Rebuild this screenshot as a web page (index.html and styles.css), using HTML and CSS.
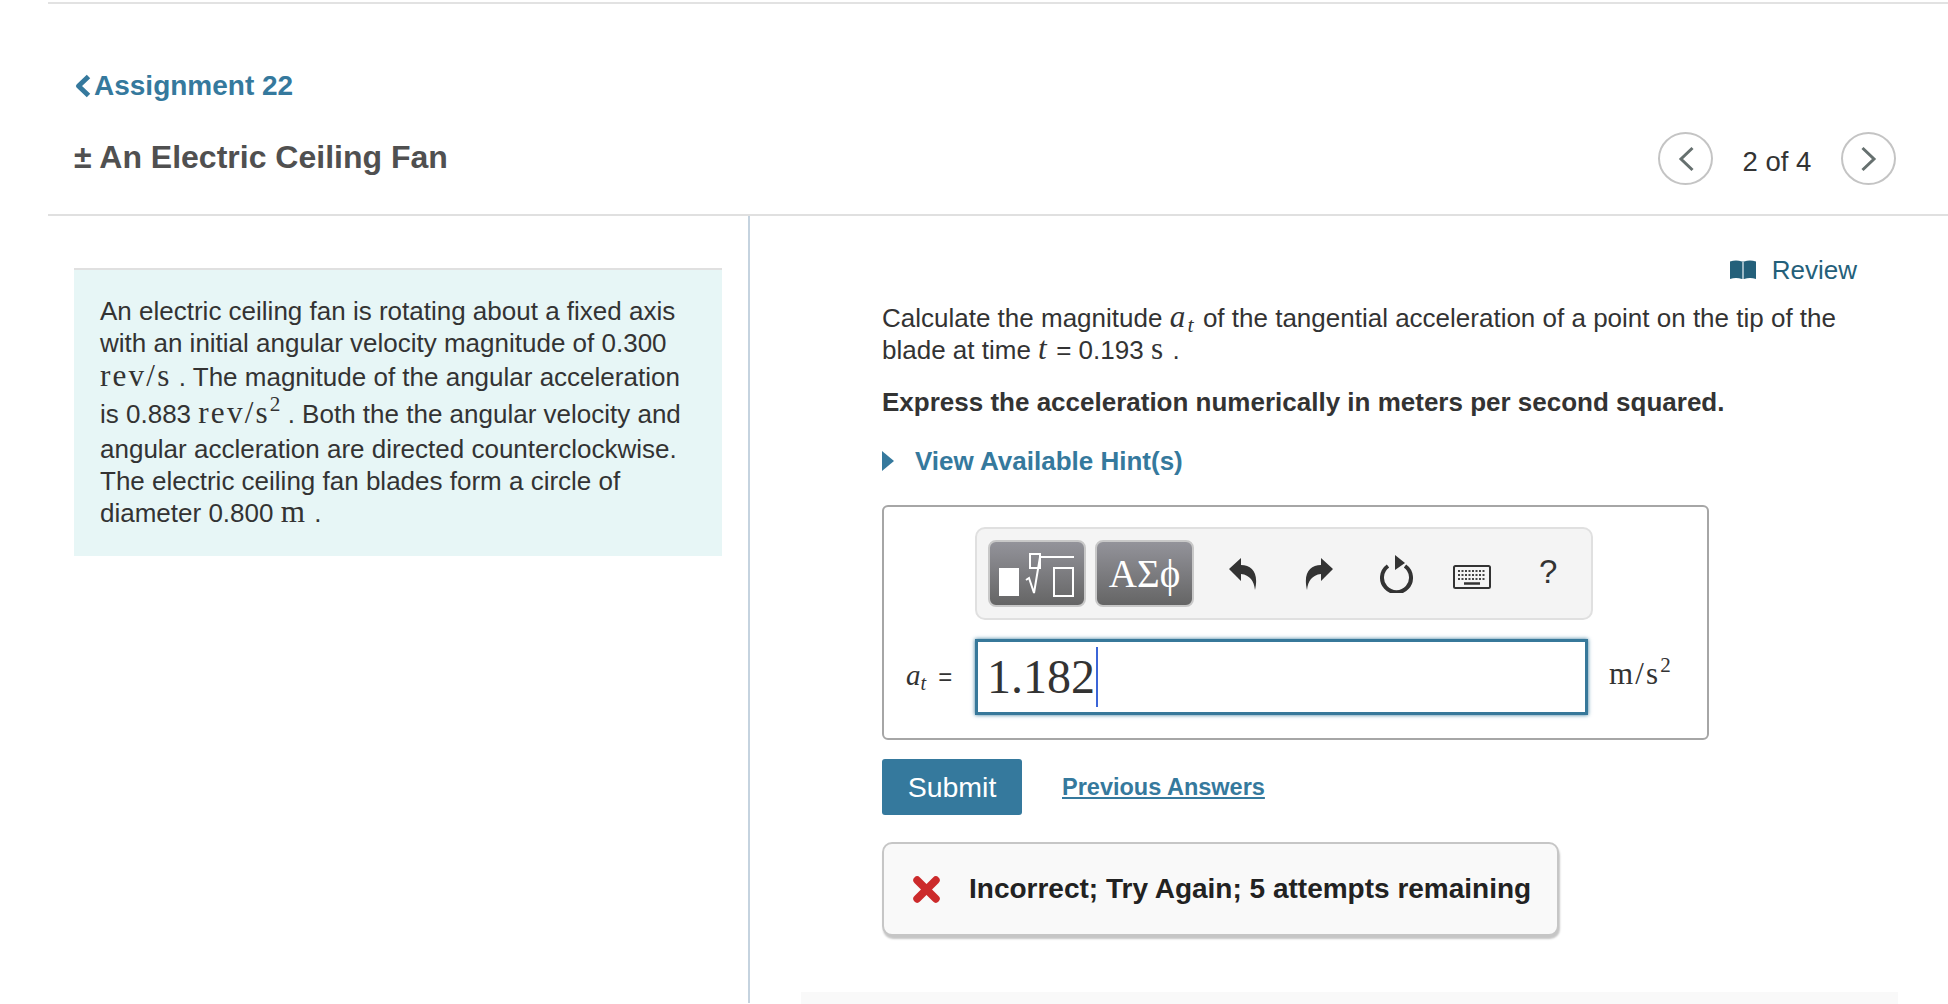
FILE: index.html
```html
<!DOCTYPE html>
<html lang="en">
<head>
<meta charset="utf-8">
<title>An Electric Ceiling Fan</title>
<link rel="stylesheet" href="styles.css">
</head>
<body>
<div class="page">
  <header class="head">
    <div class="head-left">
      <a class="back"><svg class="back-icon" viewBox="0 0 17 24"><path d="M14.500 2.500 4.500 12l10 9.500" fill="none" stroke="#35799d" stroke-width="5" stroke-linejoin="round"/></svg>Assignment 22</a>
      <h1 class="title">± An Electric Ceiling Fan</h1>
    </div>
    <nav class="pager">
      <span class="circle"><svg class="chev" viewBox="0 0 16 26"><path d="M14.500 2 3 13 14.500 24" fill="none" stroke="#66706f" stroke-width="3"/></svg></span>
      <span class="count">2 of 4</span>
      <span class="circle"><svg class="chev" viewBox="0 0 16 26"><path d="M1.500 2 13 13 1.500 24" fill="none" stroke="#66706f" stroke-width="3"/></svg></span>
    </nav>
  </header>
  <main class="main">
    <section class="left">
      <div class="panel">An electric ceiling fan is rotating about a fixed axis with an initial angular velocity magnitude of 0.300 <span class="m lift">rev/s</span> . The magnitude of the angular acceleration is 0.883 <span class="m tall">rev/s<sup>2</sup></span> . Both the the angular velocity and angular accleration are directed counterclockwise. The electric ceiling fan blades form a circle of diameter 0.800 <span class="m">m</span> .</div>
    </section>
    <section class="right">
      <div class="review">
        <svg class="book" viewBox="0 0 26 20"><path d="M0 1.500Q6 -.5 12 1.500V19Q6 17 0 19ZM14 1.500Q20 -.5 26 1.500V19Q20 17 14 19Z" fill="#24607a"/><rect x="12" y="1" width="2" height="18" fill="#9db9c6"/></svg>
        <span>Review</span>
      </div>
      <p class="para">Calculate the magnitude <span class="m"><i>a<sub>t</sub></i></span> of the tangential acceleration of a point on the tip of the blade at time <span class="m"><i>t</i></span> = 0.193 <span class="m">s</span> .</p>
      <p class="strong">Express the acceleration numerically in meters per second squared.</p>
      <div class="hint"><svg class="tri" viewBox="0 0 12 20"><path d="M0 0 12 10 0 20Z" fill="#35799d"/></svg><span>View Available Hint(s)</span></div>
      <div class="answer">
        <div class="toolbar">
          <span class="tbtn first">
            <svg class="tmpl" viewBox="0 0 76 46"><rect x="0" y="16" width="20" height="28" fill="#fff"/><rect x="31" y="2" width="10" height="14" fill="none" stroke="#fff" stroke-width="2"/><path d="M27 28l3-2 5 15 6-36h34" fill="none" stroke="#fff" stroke-width="2"/><rect x="55" y="16" width="19" height="28" fill="none" stroke="#fff" stroke-width="2"/></svg>
          </span>
          <span class="tbtn second">ΑΣϕ</span>
          <svg class="tool undo" viewBox="0 0 28 32"><path d="M0 11 12 0V7C23 7 30 15 26 32 25 23 21 17 12 16V23Z" fill="#333"/></svg>
          <svg class="tool redo" viewBox="0 0 28 32"><path d="M28 11 16 0V7C5 7-2 15 2 32 3 23 7 17 16 16V23Z" fill="#333"/></svg>
          <svg class="tool refresh" viewBox="0 0 34 38"><path d="M9 11A14.500 14.500 0 1 0 26 11" fill="none" stroke="#333" stroke-width="4"/><path d="M16 0 26 8 16 15Z" fill="#333"/></svg>
          <svg class="tool kbd" viewBox="0 0 38 24"><rect x="1" y="1" width="36" height="22" rx="1.500" fill="#f4f4f4" stroke="#333" stroke-width="2"/><path d="M5 6h28M5 10h28M5 14h28" stroke="#444" stroke-width="2" stroke-dasharray="2 1.500"/><path d="M11 18.500h16" stroke="#333" stroke-width="2.500"/></svg>
          <span class="help">?</span>
        </div>
        <div class="input-row">
          <span class="label"><span class="m"><i>a<sub>t</sub></i></span><span class="eq">=</span></span>
          <div class="input"><span class="value">1.182</span><span class="caret"></span></div>
          <span class="unit m">m/s<sup>2</sup></span>
        </div>
      </div>
      <div class="actions">
        <button class="submit">Submit</button>
        <a class="prev">Previous Answers</a>
      </div>
      <div class="feedback">
        <svg class="xmark" viewBox="0 0 28 28"><path d="M5 5 23 23M23 5 5 23" fill="none" stroke="#cc2a2b" stroke-width="7.500" stroke-linecap="round"/></svg>
        <span>Incorrect; Try Again; 5 attempts remaining</span>
      </div>
      <div class="strip"></div>
    </section>
  </main>
</div>
</body>
</html>
```
FILE: styles.css
```css
html, body { margin: 0; padding: 0; height: 1004px; overflow: hidden; background: #fff; }
body { font-family: "Liberation Sans", Arial, sans-serif; font-size: 26px; line-height: 32px; color: #333; }
.page { margin: 2px 0 0 48px; border-top: 2px solid #e2e2e2; }
.head { height: 210px; border-bottom: 2px solid #e0e0e0; display: flex; justify-content: space-between; }
.head-left { padding: 66px 0 0 26px; }
.back { display: flex; align-items: center; gap: 3px; font-weight: 700; font-size: 28px; color: #35799d; }
.back-icon { width: 17px; height: 24px; }
.title { margin: 35px 0 0; font-size: 32px; line-height: 40px; font-weight: 700; color: #505050; }
.pager { display: flex; align-items: flex-start; padding: 128px 52px 0 0; }
.circle { width: 55px; height: 53px; box-sizing: border-box; border: 2px solid #c4c4c4; border-radius: 50%; display: flex; align-items: center; justify-content: center; }
.chev { width: 16px; height: 26px; }
.count { width: 128px; text-align: center; font-size: 27.5px; line-height: 32px; margin-top: 14px; color: #333; }
.main { display: flex; height: 787px; }
.left { width: 674px; border-right: 2px solid #c5d3df; padding: 52px 0 0 26px; }
.panel { width: 648px; height: 288px; box-sizing: border-box; padding: 25px 22px 0 26px; background: #e7f6f6; border-top: 2px solid #e0e0e0; }
.m { font-family: "Liberation Serif", "Times New Roman", serif; font-size: 1.2em; letter-spacing: .07em; line-height: .9; }
.lift { line-height: 33px; }
.tall { line-height: 40px; }
sup { font-size: .68em; line-height: 0; vertical-align: .55em; letter-spacing: 0; }
sub { font-size: .7em; line-height: 0; vertical-align: -.25em; letter-spacing: .1em; }
.right { flex: 1; padding: 38px 91px 0 132px; min-width: 0; }
.review { display: flex; justify-content: flex-end; align-items: center; gap: 16px; color: #24607a; }
.book { width: 26px; height: 20px; }
.para { margin: 16px 0 0; }
.strong { margin: 20px 0 0; font-weight: 700; }
.hint { margin-top: 27px; display: flex; align-items: center; gap: 21px; font-weight: 700; color: #35799d; }
.tri { width: 12px; height: 20px; }
.answer { margin-top: 28px; width: 827px; height: 235px; box-sizing: border-box; border: 2px solid #a6a6a6; border-radius: 6px; padding: 20px 0 0 22px; }
.toolbar { margin-left: 69px; width: 618px; height: 93px; box-sizing: border-box; background: #f4f4f4; border: 2px solid #e0e0e0; border-radius: 10px; display: flex; align-items: center; padding-left: 11px; }
.tbtn { height: 67px; box-sizing: border-box; border: 2px solid #c8c8c8; border-radius: 8px; background: linear-gradient(#93939a, #656565); display: flex; align-items: center; justify-content: center; color: #fff; }
.first { width: 98px; }
.second { width: 99px; margin-left: 9px; font-family: "Liberation Serif", serif; font-size: 39px; }
.tmpl { width: 76px; height: 46px; margin-top: 3px; }
.tool { flex: none; }
.undo { width: 28px; height: 32px; margin-left: 35px; }
.redo { width: 28px; height: 32px; margin-left: 48px; }
.refresh { width: 34px; height: 38px; margin-left: 46px; }
.kbd { width: 38px; height: 24px; margin-left: 40px; margin-top: 6px; }
.help { margin-left: 48px; font-size: 33px; margin-top: -4px; }
.input-row { display: flex; align-items: center; margin-top: 19px; }
.label { width: 69px; font-size: 24px; display: flex; align-items: baseline; gap: 10px; }
.label .m { font-size: 29px; letter-spacing: 0; }
.eq { font-size: 24px; }
.input { width: 613px; height: 76px; box-sizing: border-box; border: 3px solid #37789a; box-shadow: 0 0 4px #37789a; display: flex; align-items: center; padding-left: 9px; background: #fff; }
.value { font-family: "Liberation Serif", serif; font-size: 48px; line-height: 60px; color: #333; }
.caret { width: 2px; height: 60px; margin-left: 1px; background: #3b65d8; }
.unit { margin-left: 21px; font-size: 31px; margin-top: -6px; }
.actions { margin-top: 19px; display: flex; align-items: center; gap: 40px; }
.submit { width: 140px; height: 56px; border: 0; border-radius: 3px; background: #35799d; color: #fff; font: 28.5px "Liberation Sans", Arial, sans-serif; padding: 0; }
.prev { font-weight: 700; font-size: 23.5px; color: #35799d; text-decoration: underline; }
.feedback { margin-top: 27px; width: 677px; height: 94px; box-sizing: border-box; border: 2px solid #c6c6c6; border-radius: 10px; background: #f9f9f9; box-shadow: 1px 3px 2px #c6c6c6; display: flex; align-items: center; padding-left: 28px; gap: 28px; font-weight: 700; font-size: 28px; color: #222; }
.xmark { width: 29px; height: 29px; flex: none; }
.strip { margin: 56px 0 0 -81px; width: 1097px; height: 12px; background: #f9f9f9; }
```
